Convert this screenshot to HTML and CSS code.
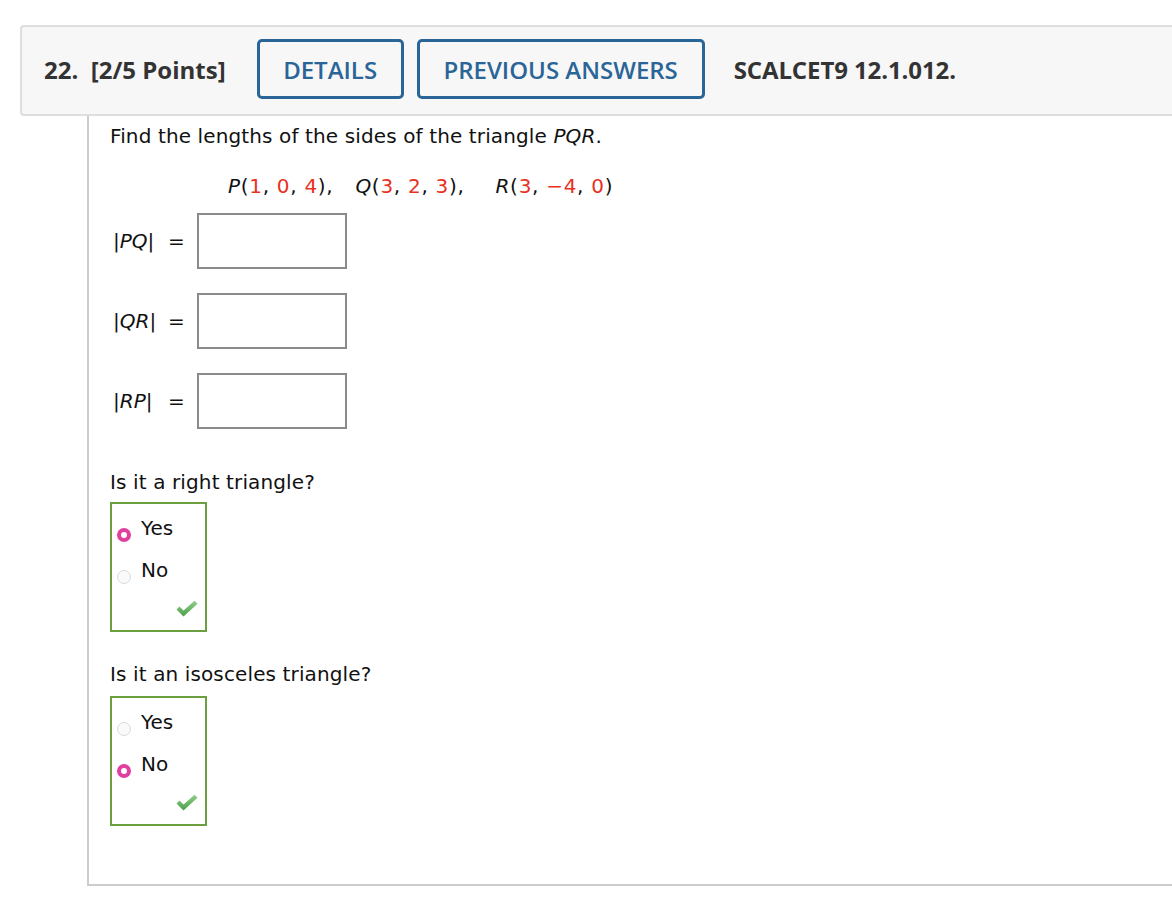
FILE: index.html
```html
<!DOCTYPE html>
<html>
<head>
<meta charset="utf-8">
<link rel="stylesheet" href="styles.css">
</head>
<body>
<div class="qhead">
  <span class="qnum">22.&nbsp; [2/5 Points]</span>
  <span class="btn btn-details">DETAILS</span>
  <span class="btn btn-prev">PREVIOUS ANSWERS</span>
  <span class="qref">SCALCET9 12.1.012.</span>
</div>
<div class="qbody">
  <p class="intro">Find the lengths of the sides of the triangle <i>PQR</i>.</p>
  <p class="points"><i>P</i>(<span class="r">1</span>, <span class="r">0</span>, <span class="r">4</span>),<span class="sp"></span><i>Q</i>(<span class="r">3</span>, <span class="r">2</span>, <span class="r">3</span>),<span class="sp sp2"></span><i>R</i>(<span class="r">3</span>, <span class="r">&minus;4</span>, <span class="r">0</span>)</p>
  <div class="eqs">
    <div class="eq"><span class="lbl">|<i>PQ</i>|</span><span class="eqs-sign">=</span><span class="box"></span></div>
    <div class="eq"><span class="lbl">|<i>QR</i>|</span><span class="eqs-sign">=</span><span class="box"></span></div>
    <div class="eq"><span class="lbl">|<i>RP</i>|</span><span class="eqs-sign">=</span><span class="box"></span></div>
  </div>
  <p class="ask ask1">Is it a right triangle?</p>
  <div class="choice">
    <div class="opt"><span class="radio on"></span><span>Yes</span></div>
    <div class="opt"><span class="radio"></span><span>No</span></div>
    <svg class="check" width="24" height="18" viewBox="0 0 24 18"><defs><linearGradient id="g1" x1="0" y1="0" x2="0" y2="1"><stop offset="0" stop-color="#8fd08a"/><stop offset="1" stop-color="#4e9e4a"/></linearGradient></defs><path d="M1.5 9.5 L4.5 6.5 L8.5 10.5 L19.5 0.8 L22.5 3.8 L8.5 16.5 Z" fill="url(#g1)"/></svg>
  </div>
  <p class="ask ask2">Is it an isosceles triangle?</p>
  <div class="choice">
    <div class="opt"><span class="radio"></span><span>Yes</span></div>
    <div class="opt"><span class="radio on"></span><span>No</span></div>
    <svg class="check" width="24" height="18" viewBox="0 0 24 18"><defs><linearGradient id="g2" x1="0" y1="0" x2="0" y2="1"><stop offset="0" stop-color="#8fd08a"/><stop offset="1" stop-color="#4e9e4a"/></linearGradient></defs><path d="M1.5 9.5 L4.5 6.5 L8.5 10.5 L19.5 0.8 L22.5 3.8 L8.5 16.5 Z" fill="url(#g2)"/></svg>
  </div>
</div>
</body>
</html>
```
FILE: styles.css
```css
html, body { margin: 0; padding: 0; background: #fff; }
body { width: 1172px; height: 922px; overflow: hidden; }

.qhead {
  margin: 25px 0 0 20px;
  height: 91px;
  padding-bottom: 3px;
  background: #f7f7f7;
  border: 2px solid #dedede;
  border-right: none;
  border-radius: 4px 0 0 4px;
  display: flex;
  align-items: center;
  font-family: "Open Sans", sans-serif;
  font-size: 24px;
  font-weight: 700;
  color: #333;
  box-sizing: border-box;
}
.qnum { margin-left: 22px; margin-right: 31px; letter-spacing: 0; }
.btn {
  box-sizing: border-box;
  height: 60px;
  display: inline-flex;
  align-items: center;
  justify-content: center;
  border: 3px solid #2a6597;
  border-radius: 5px;
  color: #2a6597;
  font-weight: 600;
  background: #f7f7f7;
}
.btn-details { width: 147px; margin-right: 13px; }
.btn-prev { width: 288px; margin-right: 29px; }
.qref { letter-spacing: -0.1px; }

.qbody {
  margin-left: 87px;
  height: 770px;
  border-left: 2px solid #cccccc;
  border-bottom: 2px solid #cccccc;
  box-sizing: border-box;
  padding-left: 21px;
  padding-top: 9px;
  font-family: "DejaVu Sans", "Bitstream Vera Sans", Verdana, sans-serif;
  font-size: 20px;
  color: #111;
}
.qbody p { margin: 0; }
.intro { line-height: 22px; letter-spacing: 0.12px; }
.points { margin-top: 28px !important; padding-left: 118px; line-height: 22px; letter-spacing: 0.7px; }
.points .sp { display: inline-block; width: 22px; }
.points .sp2 { width: 31px; }
.r { color: #e8311f; }

.eqs { margin-top: 16px; display: flex; flex-direction: column; gap: 24px; }
.eq { display: flex; align-items: center; height: 56px; }
.lbl { width: 56px; padding-left: 3px; box-sizing: border-box; }
.eqs-sign { width: 31px; padding-left: 2px; box-sizing: border-box; }
.box {
  width: 150px; height: 56px; box-sizing: border-box;
  border: 2px solid #8a8a8a; background: #fff;
}
.ask { line-height: 22px; letter-spacing: 0.12px; }
.ask1 { margin-top: 42px !important; }
.ask2 { margin-top: 31px !important; }

.choice {
  margin-top: 9px;
  width: 97px; height: 130px; box-sizing: border-box;
  border: 2px solid #6b9f3f;
  position: relative;
  padding-top: 13px;
}
.ask2 + .choice { margin-top: 11px; height: 130px; }
.opt { display: flex; align-items: flex-start; height: 42px; line-height: 22px; }
.opt span:last-child { margin-left: 10px; }
.radio {
  width: 14px; height: 14px; box-sizing: border-box;
  border-radius: 50%;
  border: 1px solid #dadada;
  background: #fafafa;
  margin-left: 5px;
  margin-top: 11px;
  flex: none;
}
.radio.on { border: 4px solid #e040a0; background: #fff; }
.check { position: absolute; left: 63px; bottom: 12px; }
```
